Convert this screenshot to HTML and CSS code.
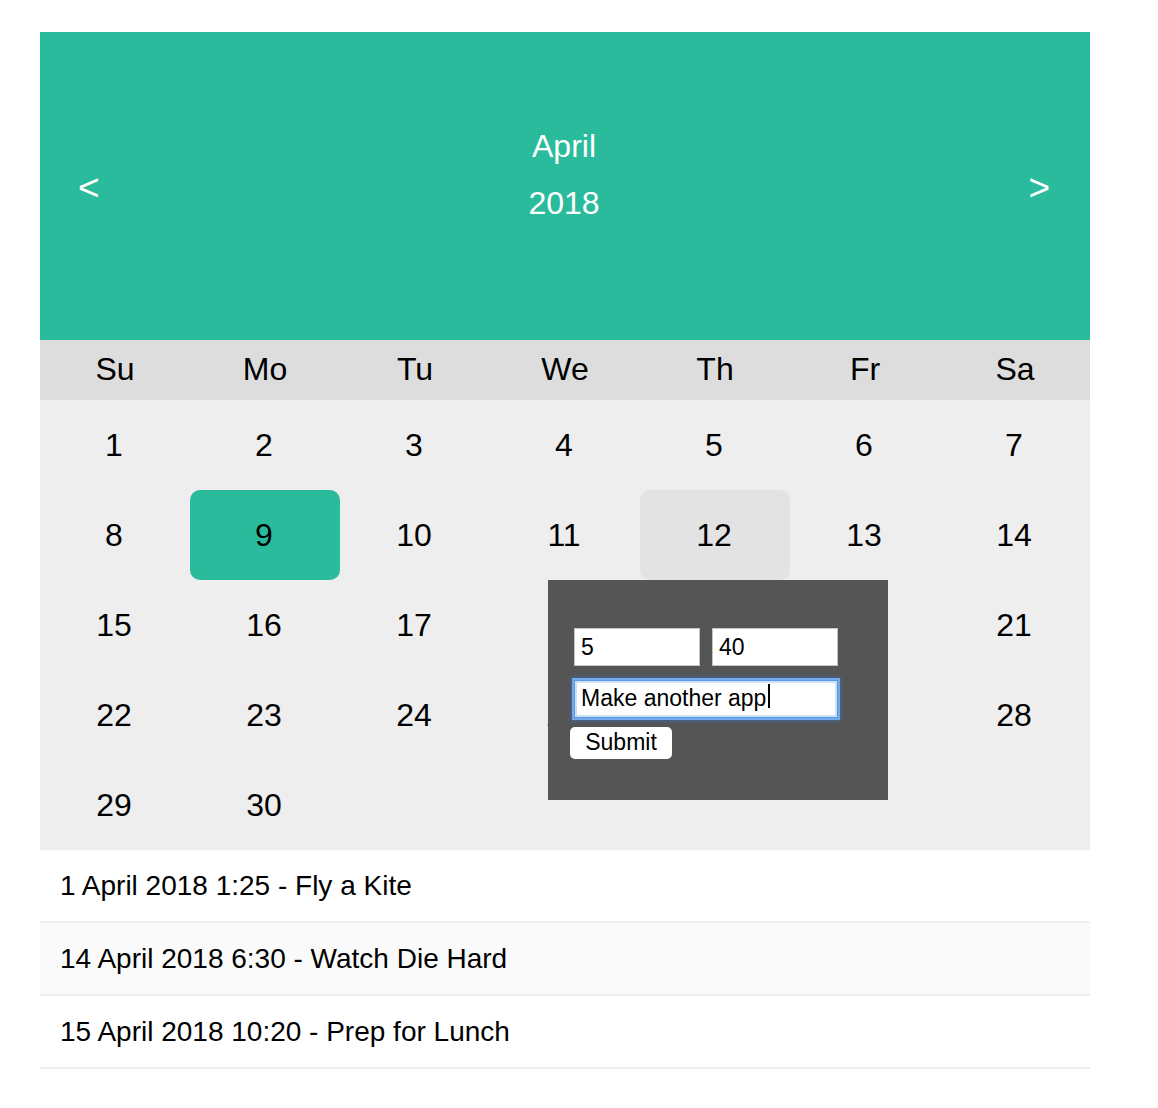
FILE: index.html
```html
<!DOCTYPE html>
<html lang="en">
<head>
<meta charset="utf-8">
<title>Calendar</title>
<link rel="stylesheet" href="styles.css">
</head>
<body>
<div class="calendar">
  <div class="cal-header">
    <span class="nav">&lt;</span>
    <div class="title">
      <div class="title-line">April</div>
      <div class="title-line">2018</div>
    </div>
    <span class="nav">&gt;</span>
  </div>
  <div class="weekdays">
    <div>Su</div><div>Mo</div><div>Tu</div><div>We</div><div>Th</div><div>Fr</div><div>Sa</div>
  </div>
  <div class="days">
    <div class="day">1</div><div class="day">2</div><div class="day">3</div><div class="day">4</div><div class="day">5</div><div class="day">6</div><div class="day">7</div>
    <div class="day">8</div><div class="day selected">9</div><div class="day">10</div><div class="day">11</div><div class="day hovered">12</div><div class="day">13</div><div class="day">14</div>
    <div class="day">15</div><div class="day">16</div><div class="day">17</div><div class="day">18</div><div class="day">19</div><div class="day">20</div><div class="day">21</div>
    <div class="day">22</div><div class="day">23</div><div class="day">24</div><div class="day">25</div><div class="day">26</div><div class="day">27</div><div class="day">28</div>
    <div class="day">29</div><div class="day">30</div><div class="day"></div><div class="day"></div><div class="day"></div><div class="day"></div><div class="day"></div>

    <form class="popup">
      <div class="time-row">
        <input class="field num" type="text" value="5">
        <input class="field num" type="text" value="40">
      </div>
      <div class="desc-wrap">
        <input class="field desc" type="text" value="Make another app">
        <span class="caret"></span>
      </div>
      <button class="submit" type="button">Submit</button>
    </form>
  </div>
  <ul class="events">
    <li class="event">1 April 2018 1:25 - Fly a Kite</li>
    <li class="event alt">14 April 2018 6:30 - Watch Die Hard</li>
    <li class="event">15 April 2018 10:20 - Prep for Lunch</li>
  </ul>
</div>
</body>
</html>
```

FILE: styles.css
```css
* { box-sizing: border-box; }

body {
  margin: 0;
  background: #ffffff;
  font-family: "Liberation Sans", Arial, Helvetica, sans-serif;
  color: #000;
}

.calendar {
  width: 1050px;
  margin: 32px 0 0 40px;
}

.cal-header {
  height: 308px;
  background: #29bb9b;
  color: #fff;
  display: flex;
  align-items: center;
  justify-content: space-between;
  padding: 0 40px 0 38px;
}

.nav {
  font-size: 37px;
  line-height: 40px;
  margin-top: 4px;
  cursor: pointer;
}

.title {
  display: flex;
  flex-direction: column;
  align-items: center;
  margin-bottom: 22px;
  font-size: 32px;
}

.title-line {
  line-height: 57px;
}

.weekdays {
  display: grid;
  grid-template-columns: repeat(7, 1fr);
  height: 60px;
  background: #dddddd;
  font-size: 32px;
}

.weekdays > div {
  display: flex;
  align-items: center;
  justify-content: center;
  padding-bottom: 2px;
}

.days {
  position: relative;
  display: grid;
  grid-template-columns: repeat(7, 1fr);
  grid-auto-rows: 90px;
  background: #eeeeee;
  font-size: 32px;
}

.day {
  display: flex;
  align-items: center;
  justify-content: center;
  border-radius: 10px;
  padding-right: 2px;
}

.day.selected {
  background: #29bb9b;
}

.day.hovered {
  background: #e3e3e3;
}

.popup {
  position: absolute;
  left: 508px;
  top: 180px;
  width: 340px;
  height: 220px;
  margin: 0;
  background: #555555;
  padding: 48px 0 0 22px;
  display: flex;
  flex-direction: column;
  align-items: flex-start;
}

.time-row {
  display: flex;
  gap: 12px;
  margin-left: 4px;
}

.field {
  font-family: "Liberation Sans", Arial, Helvetica, sans-serif;
  font-size: 23px;
  color: #000;
  background: #fff;
  border: 1px solid #c4c4c4;
  padding: 0 6px;
  margin: 0;
  outline: none;
}

.num {
  width: 126px;
  height: 38px;
}

.desc-wrap {
  position: relative;
  margin: 11px 0 0 4px;
}

.desc {
  width: 264px;
  height: 38px;
  border: 1px solid #5b98e4;
  box-shadow: 0 0 0 2px #74a9ec, 0 0 4px 3px rgba(60, 120, 210, 0.5), inset 0 0 0 2px #cfe1f9;
}

.caret {
  position: absolute;
  left: 194px;
  top: 7px;
  width: 2px;
  height: 24px;
  background: #000;
}

.submit {
  margin-top: 9px;
  width: 102px;
  height: 32px;
  background: #fff;
  border: none;
  border-radius: 5px;
  font-family: "Liberation Sans", Arial, Helvetica, sans-serif;
  font-size: 23px;
  color: #000;
  padding: 0;
}

.events {
  list-style: none;
  margin: 0;
  padding: 0;
}

.event {
  height: 73px;
  display: flex;
  align-items: center;
  padding-left: 20px;
  font-size: 28px;
  background: #fff;
  border-bottom: 2px solid #eeeeee;
}

.event.alt {
  background: #fafafa;
}
```
